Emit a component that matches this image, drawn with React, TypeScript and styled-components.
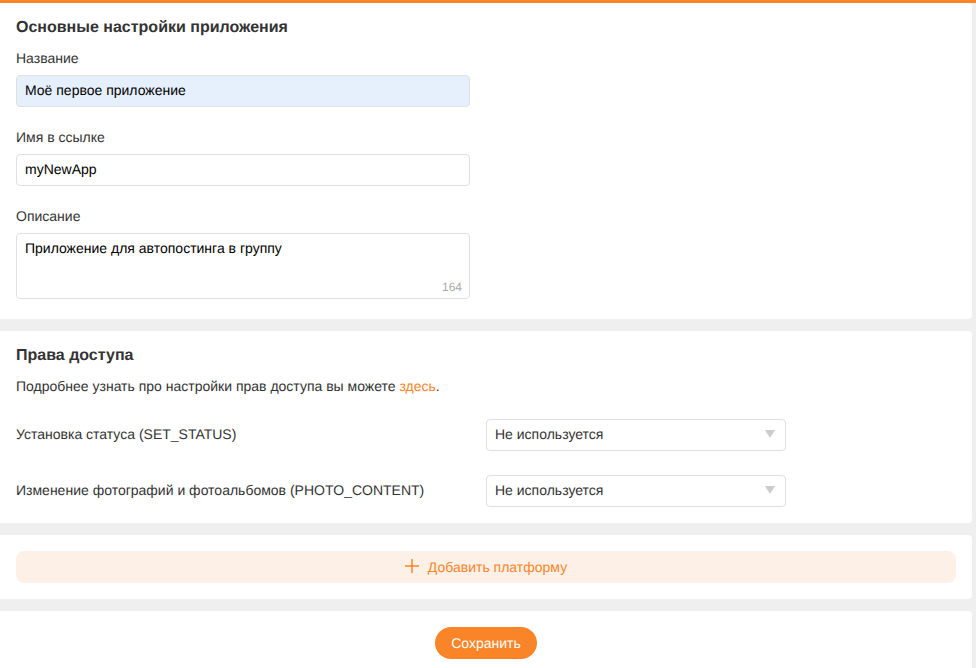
import styled, { createGlobalStyle } from "styled-components";

const permissions = [
  "Установка статуса (SET_STATUS)",
  "Изменение фотографий и фотоальбомов (PHOTO_CONTENT)",
];

const GlobalStyle = createGlobalStyle`
  html, body {
    margin: 0;
    padding: 0;
    height: 100%;
    overflow: hidden;
    background: #efefef;
  }
  * {
    box-sizing: border-box;
  }
`;

const App = () => {
  return (
    <Page>
      <GlobalStyle />
      <Card>
        <Title>Основные настройки приложения</Title>
        <Field>
          <Label>Название</Label>
          <Input $filled defaultValue="Моё первое приложение" />
        </Field>
        <Field>
          <Label>Имя в ссылке</Label>
          <Input defaultValue="myNewApp" />
        </Field>
        <Field>
          <Label>Описание</Label>
          <AreaWrap>
            <Area defaultValue="Приложение для автопостинга в группу" />
            <Counter>164</Counter>
          </AreaWrap>
        </Field>
      </Card>
      <AccessCard>
        <Title>Права доступа</Title>
        <Hint>
          Подробнее узнать про настройки прав доступа вы можете{" "}
          <HintLink href="#">здесь</HintLink>.
        </Hint>
        <Rows>
          {permissions.map((name) => (
            <Row key={name}>
              <RowLabel>{name}</RowLabel>
              <SelectBox>
                <span>Не используется</span>
                <Arrow />
              </SelectBox>
            </Row>
          ))}
        </Rows>
      </AccessCard>
      <PlatformCard>
        <AddButton>
          <PlusIcon width="14" height="14" viewBox="0 0 14 14" fill="none">
            <path d="M7 0v14M0 7h14" stroke="#f98528" strokeWidth="1.5" />
          </PlusIcon>
          Добавить платформу
        </AddButton>
      </PlatformCard>
      <SaveCard>
        <SaveButton>Сохранить</SaveButton>
      </SaveCard>
    </Page>
  );
};

const Page = styled.div`
  height: 100vh;
  overflow: hidden;
  border-top: 3px solid #f98528;
  padding-right: 4px;
  display: flex;
  flex-direction: column;
  gap: 12px;
  font-family: "Liberation Sans", Arial, sans-serif;
  font-size: 14px;
  line-height: 20px;
  color: #333;
  text-rendering: geometricPrecision;
`;
const Card = styled.section`
  flex-shrink: 0;
  background: #fff;
  border-radius: 0 4px 4px 0;
  padding: 15px 16px 20px;
`;
const AccessCard = styled(Card)`
  padding-bottom: 16px;
`;
const PlatformCard = styled(Card)`
  padding: 16px;
`;
const SaveCard = styled(Card)`
  display: flex;
  justify-content: center;
  padding: 16px;
`;
const Title = styled.h2`
  margin: 0;
  font-size: 16px;
  line-height: 20px;
  font-weight: 700;
  color: #333;
`;
const Field = styled.div`
  margin-top: 10px;
  & + & {
    margin-top: 20px;
  }
`;
const Label = styled.label`
  display: block;
  margin-bottom: 7px;
  color: #333;
`;
const Input = styled.input<{ $filled?: boolean }>`
  display: block;
  width: 454px;
  height: 32px;
  padding: 0 8px 2px;
  border: 1px solid #e0e0e0;
  border-radius: 4px;
  outline: none;
  background: ${(props) => (props.$filled ? "#e6f0fc" : "#fff")};
  font: inherit;
  text-rendering: inherit;
  color: #000;
`;
const AreaWrap = styled.div`
  position: relative;
  width: 454px;
  height: 66px;
`;
const Area = styled.textarea`
  display: block;
  width: 100%;
  height: 100%;
  padding: 4px 8px;
  border: 1px solid #e0e0e0;
  border-radius: 4px;
  outline: none;
  resize: none;
  background: #fff;
  font: inherit;
  text-rendering: inherit;
  color: #000;
`;
const Counter = styled.span`
  position: absolute;
  right: 8px;
  bottom: 2px;
  font-size: 12px;
  line-height: 20px;
  color: #aaa;
`;
const Hint = styled.p`
  margin: 10px 0 0;
`;
const HintLink = styled.a`
  color: #f98528;
  text-decoration: none;
`;
const Rows = styled.div`
  margin-top: 23px;
  display: flex;
  flex-direction: column;
  gap: 24px;
`;
const Row = styled.div`
  display: flex;
  align-items: center;
`;
const RowLabel = styled.div`
  width: 470px;
  padding-bottom: 2px;
`;
const SelectBox = styled.div`
  width: 300px;
  height: 32px;
  padding: 0 10px 2px 8px;
  display: flex;
  align-items: center;
  justify-content: space-between;
  border: 1px solid #e0e0e0;
  border-radius: 4px;
  background: #fff;
  color: #333;
`;
const Arrow = styled.i`
  width: 0;
  height: 0;
  border-left: 5px solid transparent;
  border-right: 5px solid transparent;
  border-top: 8px solid #ccc;
`;
const AddButton = styled.button`
  width: 100%;
  height: 32px;
  display: flex;
  align-items: center;
  justify-content: center;
  gap: 9px;
  border: 0;
  border-radius: 8px;
  background: #fdf1e7;
  color: #f98528;
  font: inherit;
  text-rendering: inherit;
  padding: 0;
`;
const PlusIcon = styled.svg`
  margin-bottom: 2px;
`;
const SaveButton = styled.button`
  width: 102px;
  height: 32px;
  border: 0;
  border-radius: 16px;
  background: #f98528;
  color: #fff;
  font: inherit;
  text-rendering: inherit;
  padding: 0;
`;

export default App;
